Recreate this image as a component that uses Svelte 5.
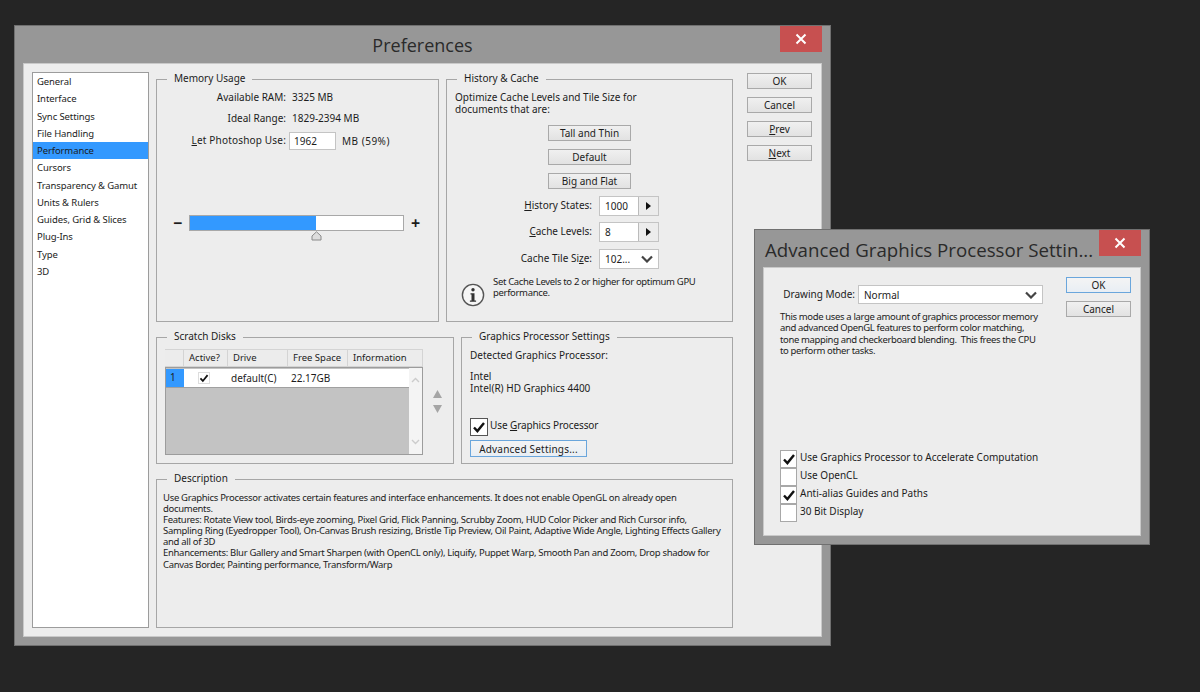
<script lang="ts">
  const categories = [
    'General', 'Interface', 'Sync Settings', 'File Handling', 'Performance', 'Cursors',
    'Transparency & Gamut', 'Units & Rulers', 'Guides, Grid & Slices', 'Plug-Ins', 'Type', '3D'
  ];
  const active = 'Performance';
  const columns = ['', 'Active?', 'Drive', 'Free Space', 'Information'];
  const gpuOptions = [
    { label: 'Use Graphics Processor to Accelerate Computation', checked: true },
    { label: 'Use OpenCL', checked: false },
    { label: 'Anti-alias Guides and Paths', checked: true },
    { label: '30 Bit Display', checked: false }
  ];
</script>

{#snippet closeButton()}
  <div class="close">
    <svg width="12" height="12" viewBox="0 0 12 12"><path d="M1.5 1.5l9 9M10.5 1.5l-9 9" stroke="#fff" stroke-width="2" /></svg>
  </div>
{/snippet}

{#snippet tick()}
  <svg width="14" height="12" viewBox="0 0 14 12"><path d="M2 6.5l3.4 3.6L12 2" fill="none" stroke="#111" stroke-width="2.4" /></svg>
{/snippet}

{#snippet chevron()}
  <svg width="12" height="8" viewBox="0 0 12 8"><path d="M1 1.5l5 5 5-5" fill="none" stroke="#444" stroke-width="2.2" /></svg>
{/snippet}

<div class="desktop">
  <section class="window prefs">
    <header class="titlebar">
      <h1>Preferences</h1>
      {@render closeButton()}
    </header>
    <div class="content">
      <ul class="categories">
        {#each categories as name}
          <li class:selected={name === active}>{name}</li>
        {/each}
      </ul>

      <div class="panels">
        <div class="row first">
          <div class="group memory">
            <span class="legend">Memory Usage</span>
            <div class="stat"><span class="key">Available RAM:</span><span>3325 MB</span></div>
            <div class="stat"><span class="key">Ideal Range:</span><span>1829-2394 MB</span></div>
            <div class="stat use">
              <span class="key"><u>L</u>et Photoshop Use:</span>
              <span class="input">1962</span>
              <span class="percent">MB (59%)</span>
            </div>
            <div class="slider">
              <span class="sign">−</span>
              <div class="track">
                <div class="fill" style="width: 59%"></div>
                <svg class="thumb" width="11" height="10" viewBox="0 0 11 10"><path d="M5.5 .8L10 5v4H1V5z" fill="#ddd" stroke="#8a8a8a" /></svg>
              </div>
              <span class="sign">+</span>
            </div>
          </div>

          <div class="group history">
            <span class="legend">History &amp; Cache</span>
            <p class="optimize">Optimize Cache Levels and Tile Size for<br />documents that are:</p>
            <div class="presets">
              <button>Tall and Thin</button>
              <button>Default</button>
              <button>Big and Flat</button>
            </div>
            <div class="spin">
              <span class="key"><u>H</u>istory States:</span>
              <span class="spinbox"><span>1000</span><i></i></span>
            </div>
            <div class="spin">
              <span class="key"><u>C</u>ache Levels:</span>
              <span class="spinbox"><span>8</span><i></i></span>
            </div>
            <div class="spin">
              <span class="key">Cache Tile Si<u>z</u>e:</span>
              <span class="dropdown short"><span>102...</span>{@render chevron()}</span>
            </div>
            <div class="hint">
              <svg width="24" height="24" viewBox="0 0 24 24">
                <circle cx="12" cy="12" r="10.6" fill="#f6f6f6" stroke="#555" stroke-width="1.4" />
                <circle cx="12" cy="6.8" r="1.7" fill="#333" />
                <path d="M9.5 10.2h4v7.2h1.6v1.4H8.9v-1.4h1.6v-5.8h-1z" fill="#333" />
              </svg>
              <p>Set Cache Levels to 2 or higher for optimum GPU<br />performance.</p>
            </div>
          </div>
        </div>

        <div class="row second">
          <div class="group scratch">
            <span class="legend">Scratch Disks</span>
            <div class="disks">
              <div class="table">
                <div class="thead">
                  {#each columns as col}
                    <span>{col}</span>
                  {/each}
                </div>
                <div class="tbody">
                  <div class="rows">
                    <div class="disk">
                      <span class="index">1</span>
                      <span class="mini">{@render tick()}</span>
                      <span>default(C)</span>
                      <span>22.17GB</span>
                    </div>
                  </div>
                  <div class="scrollbar">
                    <svg width="9" height="6" viewBox="0 0 9 6"><path d="M1 5l3.5-3.5L8 5" fill="none" stroke="#ccc" stroke-width="1.4" /></svg>
                    <svg width="9" height="6" viewBox="0 0 9 6"><path d="M1 1l3.5 3.5L8 1" fill="none" stroke="#ccc" stroke-width="1.4" /></svg>
                  </div>
                </div>
              </div>
              <div class="order">
                <svg width="9" height="8" viewBox="0 0 9 8"><path d="M4.5 0L9 8H0z" fill="#a5a5a5" /></svg>
                <svg width="9" height="8" viewBox="0 0 9 8"><path d="M0 0h9L4.5 8z" fill="#a5a5a5" /></svg>
              </div>
            </div>
          </div>

          <div class="group gpu">
            <span class="legend">Graphics Processor Settings</span>
            <p class="detected">Detected Graphics Processor:</p>
            <p class="card">Intel<br />Intel(R) HD Graphics 4400</p>
            <label class="check">
              <span class="box">{@render tick()}</span>
              <span class="check-text">Use <u>G</u>raphics Processor</span>
            </label>
            <button class="focus advanced">Advanced Settings...</button>
          </div>
        </div>

        <div class="group description">
          <span class="legend">Description</span>
          <p>Use Graphics Processor activates certain features and interface enhancements. It does not enable OpenGL on already open documents.<br />
          Features: Rotate View tool, Birds-eye zooming, Pixel Grid, Flick Panning, Scrubby Zoom, HUD Color Picker and Rich Cursor info, Sampling Ring (Eyedropper Tool), On-Canvas Brush resizing, Bristle Tip Preview, Oil Paint, Adaptive Wide Angle, Lighting Effects Gallery and all of 3D<br />
          Enhancements: Blur Gallery and Smart Sharpen (with OpenCL only), Liquify, Puppet Warp, Smooth Pan and Zoom, Drop shadow for Canvas Border, Painting performance, Transform/Warp</p>
        </div>
      </div>

      <div class="actions">
        <button>OK</button>
        <button>Cancel</button>
        <button><u>P</u>rev</button>
        <button><u>N</u>ext</button>
      </div>
    </div>
  </section>

  <section class="window advanced-gpu">
    <header class="titlebar">
      <h2>Advanced Graphics Processor Settin...</h2>
      {@render closeButton()}
    </header>
    <div class="content adv">
      <div class="adv-main">
        <div class="mode">
          <span class="key">Drawing Mode:</span>
          <span class="dropdown"><span>Normal</span>{@render chevron()}</span>
        </div>
        <p class="mode-help">This mode uses a large amount of graphics processor memory<br />and advanced OpenGL features to perform color matching,<br />tone mapping and checkerboard blending.  This frees the CPU<br />to perform other tasks.</p>
        <div class="options">
          {#each gpuOptions as opt}
            <label class="check">
              <span class="box">{#if opt.checked}{@render tick()}{/if}</span>
              <span class="check-text">{opt.label}</span>
            </label>
          {/each}
        </div>
      </div>
      <div class="actions">
        <button class="focus">OK</button>
        <button>Cancel</button>
      </div>
    </div>
  </section>
</div>

<style>
  :global(body) {
    margin: 0;
    background: #252525;
  }
  .desktop {
    position: relative;
    width: 1200px;
    height: 692px;
    overflow: hidden;
    background: #252525;
    color: #1c1c1c;
    font: 10px/12px "Noto Sans", sans-serif;
  }
  p {
    margin: 0;
  }

  /* Windows */
  .window {
    position: absolute;
    box-sizing: border-box;
    display: flex;
    flex-direction: column;
    background: #979797;
    border: 1px solid #707070;
    padding: 0 8px 8px;
  }
  .prefs {
    left: 14px;
    top: 25px;
    width: 817px;
    height: 621px;
  }
  .advanced-gpu {
    left: 754px;
    top: 229px;
    width: 396px;
    height: 316px;
  }
  .titlebar {
    position: relative;
    flex: none;
    height: 37px;
    display: flex;
    align-items: center;
  }
  .titlebar h1,
  .titlebar h2 {
    margin: 0;
    font: 400 18px/24px "Open Sans", sans-serif;
    color: #2a2a2a;
    white-space: nowrap;
  }
  .titlebar h1 {
    flex: 1;
    text-align: center;
    padding-top: 1px;
  }
  .titlebar h2 {
    padding: 3px 0 0 2px;
    font-size: 18.7px;
  }
  .close {
    position: absolute;
    right: 0;
    top: 0;
    width: 42px;
    height: 26px;
    display: flex;
    align-items: center;
    justify-content: center;
    background: #c75050;
  }
  .content {
    flex: 1;
    min-height: 0;
    display: flex;
    gap: 7px;
    padding: 8px;
    background: #ededed;
    border: 1px solid #c9c9c9;
  }

  /* Category list */
  .categories {
    flex: none;
    box-sizing: border-box;
    width: 117px;
    margin: 0;
    padding: 0;
    list-style: none;
    background: #fff;
    border: 1px solid #9c9c9c;
    font-size: 9.5px;
    letter-spacing: -0.1px;
  }
  .categories li {
    height: 17.27px;
    line-height: 17px;
    padding-left: 4px;
    white-space: nowrap;
  }
  .categories .selected {
    background: #3399ff;
  }

  /* Panels */
  .panels {
    flex: none;
    width: 577px;
    padding-top: 7px;
    display: flex;
    flex-direction: column;
    gap: 15px;
  }
  .row {
    display: flex;
    gap: 7px;
  }
  .row.first {
    height: 243px;
  }
  .row.second {
    height: 127px;
  }
  .group {
    position: relative;
    box-sizing: border-box;
    border: 1px solid #a6a6a6;
  }
  .legend {
    position: absolute;
    left: 10px;
    top: -8px;
    padding: 0 7px;
    background: #ededed;
  }
  .memory {
    width: 283px;
    padding-top: 10px;
  }
  .history {
    flex: 1;
    padding: 11px 8px 0;
  }
  .key {
    flex: none;
    text-align: right;
    white-space: nowrap;
  }
  .stat {
    display: flex;
    align-items: center;
    gap: 6px;
    height: 14px;
    margin-bottom: 7px;
  }
  .stat .key {
    width: 129px;
  }
  .use {
    height: 18px;
    gap: 3px;
  }
  .use .key {
    padding-bottom: 2px;
    letter-spacing: 0.18px;
  }
  .percent {
    letter-spacing: 0.5px;
  }
  .input {
    box-sizing: border-box;
    width: 47px;
    height: 18px;
    line-height: 17px;
    padding-left: 4px;
    margin-right: 3px;
    background: #fff;
    border: 1px solid #c4c4c4;
  }
  .slider {
    display: flex;
    align-items: center;
    margin: 65px 0 0 16px;
    gap: 7px;
  }
  .sign {
    width: 9px;
    text-align: center;
    font-size: 16px;
    font-weight: 700;
  }
  .track {
    position: relative;
    box-sizing: border-box;
    width: 215px;
    height: 16px;
    background: #fff;
    border: 1px solid #a8a8a8;
  }
  .fill {
    height: 100%;
    background: #3399ff;
  }
  .thumb {
    position: absolute;
    left: 121px;
    top: 15px;
  }

  /* History */
  .presets {
    display: flex;
    flex-direction: column;
    align-items: center;
    gap: 8px;
    margin-top: 10px;
  }
  .presets button {
    width: 83px;
  }
  button {
    box-sizing: border-box;
    display: block;
    height: 16px;
    padding: 0;
    background: linear-gradient(#f0f0f0, #e2e2e2);
    border: 1px solid #a9a9a9;
    border-radius: 0;
    color: inherit;
    font: inherit;
    line-height: 14px;
    text-align: center;
  }
  .spin {
    display: flex;
    align-items: center;
    gap: 7px;
    height: 20px;
    margin-top: 6.5px;
  }
  .spin .key {
    width: 137px;
    padding-bottom: 2px;
  }
  .spinbox,
  .dropdown {
    box-sizing: border-box;
    display: flex;
    align-items: center;
    height: 20px;
    background: #fff;
    border: 1px solid #c4c4c4;
  }
  .spinbox {
    width: 60px;
  }
  .spinbox span {
    flex: 1;
    padding-left: 5px;
  }
  .spinbox i {
    position: relative;
    width: 19px;
    height: 18px;
    background: #ececec;
    border-left: 1px solid #bbb;
  }
  .spinbox i::after {
    content: "";
    position: absolute;
    left: 7px;
    top: 5px;
    border: 4px solid transparent;
    border-left: 5px solid #111;
    border-right: 0;
  }
  .dropdown {
    justify-content: space-between;
    padding: 0 5px;
  }
  .dropdown.short {
    width: 60px;
  }
  .hint {
    display: flex;
    gap: 8px;
    margin: 7px 0 0 6px;
  }
  .hint svg {
    flex: none;
    margin-top: 7px;
  }
  .hint p {
    font-size: 9.5px;
    letter-spacing: -0.33px;
    line-height: 11px;
    white-space: nowrap;
  }

  /* Scratch disks */
  .scratch {
    width: 298px;
    padding: 11px 8px 0;
  }
  .disks {
    display: flex;
    align-items: center;
    gap: 10px;
  }
  .table {
    flex: none;
    width: 258px;
  }
  .thead {
    display: grid;
    grid-template-columns: 19px 44px 60px 60px 1fr;
    height: 18px;
  }
  .thead span {
    box-sizing: border-box;
    line-height: 15px;
    padding-left: 5px;
    background: #ececec;
    border: 1px solid #d4d4d4;
    border-width: 1px 1px 1px 0;
    font-size: 9.5px;
    white-space: nowrap;
  }
  .tbody {
    display: flex;
    box-sizing: border-box;
    height: 88px;
    border: 1px solid #9c9c9c;
  }
  .rows {
    flex: 1;
    background: #c3c3c3;
  }
  .disk {
    display: grid;
    grid-template-columns: 18px 47px 60px 1fr;
    align-items: center;
    height: 18px;
    margin-top: 1px;
    background: #fff;
    border-bottom: 1px solid #a0a0a0;
  }
  .index {
    height: 100%;
    line-height: 17px;
    padding-left: 4px;
    background: #3399ff;
  }
  .mini {
    margin-left: 14px;
    box-sizing: border-box;
    width: 12px;
    height: 12px;
    display: flex;
    align-items: center;
    justify-content: center;
    border: 1px solid #ddd;
  }
  .mini svg {
    width: 11px;
    height: 10px;
  }
  .scrollbar {
    flex: none;
    width: 13px;
    display: flex;
    flex-direction: column;
    align-items: center;
    justify-content: space-between;
    padding: 9px 0;
    box-sizing: border-box;
    background: #f4f4f4;
  }
  .order {
    display: flex;
    flex-direction: column;
    gap: 7px;
    margin-top: -2px;
  }

  /* GPU */
  .gpu {
    flex: 1;
    padding: 11px 8px 0;
  }
  .card {
    margin-top: 9px;
  }
  .check {
    display: flex;
    align-items: center;
    gap: 3px;
    height: 18px;
    white-space: nowrap;
  }
  .check-text {
    padding-bottom: 4px;
  }
  .box {
    box-sizing: border-box;
    flex: none;
    width: 18px;
    height: 18px;
    display: flex;
    align-items: center;
    justify-content: center;
    background: #fff;
    border: 1px solid #a8a8a8;
  }
  .gpu .check {
    margin-top: 24px;
    gap: 2px;
    letter-spacing: -0.1px;
  }
  .gpu .box {
    border-color: #555;
  }
  .advanced {
    width: 117px;
    height: 17px;
    margin-top: 4px;
    letter-spacing: 0.2px;
  }
  .focus {
    border-color: #6aa6dc;
    background: linear-gradient(#f4f4f4, #e8eef4);
  }
  .description {
    flex: 1;
    padding: 12px 6px 0;
  }
  .description p,
  .mode-help {
    font-size: 9.5px;
    letter-spacing: -0.3px;
    line-height: 11.1px;
  }

  /* Action buttons */
  .actions {
    flex: none;
    width: 65px;
    margin: 1px 0 0 7px;
    display: flex;
    flex-direction: column;
    gap: 8px;
  }

  /* Advanced dialog */
  .adv {
    padding: 8px 9px 8px 16px;
    gap: 22px;
  }
  .adv-main {
    flex: 1;
    display: flex;
    flex-direction: column;
  }
  .mode {
    display: flex;
    align-items: center;
    gap: 3px;
    margin-top: 9px;
  }
  .mode .key {
    width: 75px;
    padding-bottom: 1px;
  }
  .mode .dropdown {
    width: 185px;
    height: 19px;
    padding: 0 5px;
  }
  .mode-help {
    margin-top: 7px;
    line-height: 11.4px;
    letter-spacing: -0.36px;
    white-space: pre-wrap;
  }
  .options {
    margin-top: auto;
    margin-bottom: 5px;
  }
  .options .box {
    width: 17px;
  }
  .adv .actions {
    margin: 1px 0 0;
  }
</style>
